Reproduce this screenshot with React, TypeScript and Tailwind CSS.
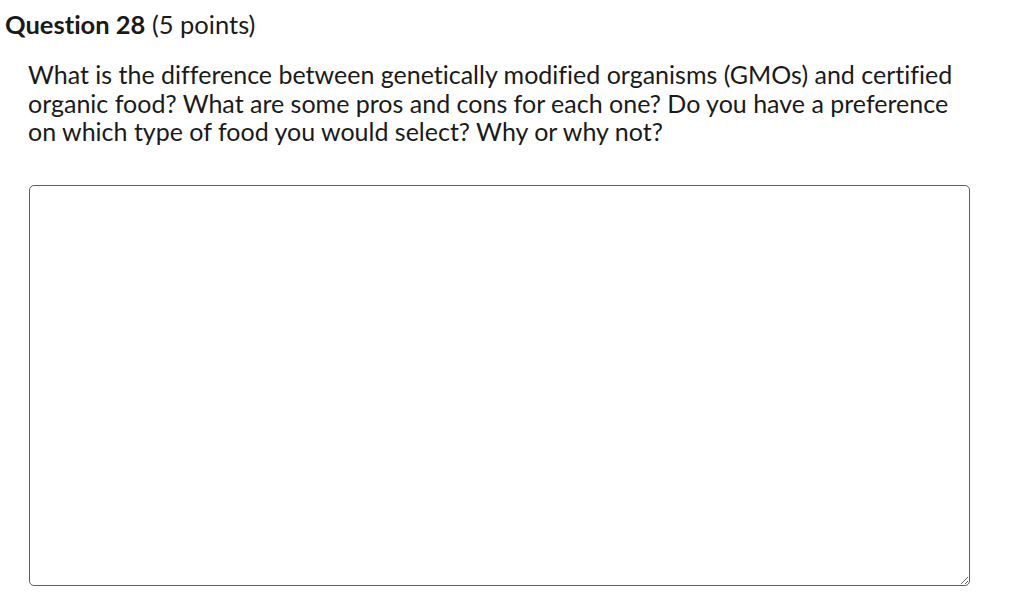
export default function App() {
  return (
    <div className="min-h-screen bg-white text-[#1a1a1a] [font-variant-ligatures:none]" style={{ fontFamily: "Lato, 'Liberation Sans', sans-serif" }}>
      <div className="pl-[5px] pt-[9px]">
        <h2 className="text-[25.5px] leading-[30px]">
          <span className="font-bold">Question 28</span> (5 points)
        </h2>
        <div className="pl-[23px] pt-[21px]">
          <p className="text-[25px] leading-[28.5px] max-w-[935px]">
            What is the difference between genetically modified organisms (GMOs) and certified organic food? What are some pros and cons for each one? Do you have a preference on which type of food you would select? Why or why not?
          </p>
          <textarea className="mt-[39px] ml-[1px] block w-[941px] h-[401px] rounded-[5px] border border-[#5f5f5a] resize-y" />
        </div>
      </div>
    </div>
  );
}
